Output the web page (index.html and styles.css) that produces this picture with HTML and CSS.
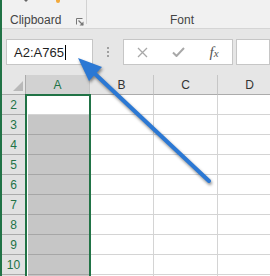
FILE: index.html
```html
<!DOCTYPE html>
<html>
<head>
<meta charset="utf-8">
<link rel="stylesheet" href="styles.css">
</head>
<body>
<div class="app">
  <div class="ribbon">
    <div class="group clip">
      <div class="clip-icons"><span class="caret"></span><span class="brush"></span></div>
      <div class="glabel">
        <span>Clipboard</span>
        <svg class="launcher" width="8" height="8" viewBox="0 0 8 8"><path d="M0.5 6.5V0.5H6.5" fill="none" stroke="#777" stroke-width="1"/><path d="M2.5 2.5L7 7" stroke="#777" stroke-width="1.2"/><path d="M7.5 3.5V7.5H3.5Z" fill="#777"/></svg>
      </div>
    </div>
    <div class="sep"></div>
    <div class="group fontg">
      <div class="glabel"><span>Font</span></div>
    </div>
  </div>

  <div class="fbar">
    <div class="namebox"><span>A2:A765</span><span class="cursor"></span></div>
    <div class="dots"><span></span><span></span><span></span></div>
    <div class="fbtns">
      <span class="slot"><svg width="11" height="11" viewBox="0 0 11 11"><path d="M1 1L10 10M10 1L1 10" stroke="#a8a8a8" stroke-width="1.3"/></svg></span>
      <span class="slot"><svg width="13" height="10" viewBox="0 0 13 10"><path d="M1 5.5L4.5 9L12 1" fill="none" stroke="#a8a8a8" stroke-width="2"/></svg></span>
      <span class="slot fx"><i>f<span class="sub">x</span></i></span>
    </div>
    <div class="finput"></div>
  </div>

  <div class="sheet">
    <div class="row hdr">
      <div class="rh corner"><span class="tri"></span></div>
      <div class="cell ch sel-h">A</div>
      <div class="cell ch">B</div>
      <div class="cell ch">C</div>
      <div class="cell ch">D</div>
    </div>
    <div class="row"><div class="rh">2</div><div class="cell a-active"></div><div class="cell"></div><div class="cell"></div><div class="cell"></div></div>
    <div class="row"><div class="rh">3</div><div class="cell a-sel"></div><div class="cell"></div><div class="cell"></div><div class="cell"></div></div>
    <div class="row"><div class="rh">4</div><div class="cell a-sel"></div><div class="cell"></div><div class="cell"></div><div class="cell"></div></div>
    <div class="row"><div class="rh">5</div><div class="cell a-sel"></div><div class="cell"></div><div class="cell"></div><div class="cell"></div></div>
    <div class="row"><div class="rh">6</div><div class="cell a-sel"></div><div class="cell"></div><div class="cell"></div><div class="cell"></div></div>
    <div class="row"><div class="rh">7</div><div class="cell a-sel"></div><div class="cell"></div><div class="cell"></div><div class="cell"></div></div>
    <div class="row"><div class="rh">8</div><div class="cell a-sel"></div><div class="cell"></div><div class="cell"></div><div class="cell"></div></div>
    <div class="row"><div class="rh">9</div><div class="cell a-sel"></div><div class="cell"></div><div class="cell"></div><div class="cell"></div></div>
    <div class="row"><div class="rh">10</div><div class="cell a-sel"></div><div class="cell"></div><div class="cell"></div><div class="cell"></div></div>
    <div class="row"><div class="rh"></div><div class="cell a-sel"></div><div class="cell"></div><div class="cell"></div><div class="cell"></div></div>
    <div class="selection"></div>
  </div>

  <svg class="arrow" width="270" height="276" viewBox="0 0 270 276">
    <line x1="209" y1="181" x2="93" y2="72" stroke="#2b78d4" stroke-width="4" stroke-linecap="round"/>
    <polygon points="78,58 102,67 89,81" fill="#2b78d4"/>
  </svg>
</div>
</body>
</html>
```

FILE: styles.css
```css
* { box-sizing: border-box; margin: 0; padding: 0; }
html, body { width: 270px; height: 276px; overflow: hidden; background: #fff; }
body { font-family: "Liberation Sans", Arial, sans-serif; }

.app {
  position: relative;
  width: 270px;
  height: 276px;
  border-left: 2px solid #217346;
  overflow: hidden;
}

/* Ribbon */
.ribbon {
  height: 29px;
  background: #f1f1f1;
  border-bottom: 1px solid #d5d5d5;
  display: flex;
  align-items: flex-start;
}
.group { height: 28px; display: flex; flex-direction: column; }
.clip { width: 84px; }
.clip-icons { height: 13px; position: relative; }
.caret {
  position: absolute; left: 22px; top: 0;
  border-left: 2px solid transparent; border-right: 2px solid transparent;
  border-top: 2px solid #666;
}
.brush {
  position: absolute; left: 54px; top: -2px;
  width: 4px; height: 5px; border-radius: 0 0 2px 2px;
  background: #f2a93b;
}
.glabel {
  display: flex; align-items: center;
  height: 14px;
  font-size: 12px; line-height: 14px; color: #444;
}
.clip .glabel { padding-left: 8px; }
.launcher { margin-left: auto; margin-right: 2px; margin-top: 3px; }
.sep { width: 1px; height: 24px; background: #d2d2d2; }
.fontg { flex: 1; }
.fontg .glabel { margin-top: 13px; padding-left: 83px; }

/* Formula bar */
.fbar {
  height: 46px;
  background: #e6e6e6;
  display: flex;
  align-items: flex-start;
  padding-top: 10px;
}
.namebox {
  margin-left: 4px;
  width: 102px; height: 26px;
  background: #fff;
  border: 1px solid #c6c6c6;
  display: flex; align-items: center;
  padding-left: 7px;
  font-size: 13px; color: #1e1e1e;
}
.cursor { width: 1px; height: 15px; background: #000; margin-left: 1px; }
.dots {
  margin-left: 14px; margin-top: 8px;
  display: flex; flex-direction: column; gap: 2px;
}
.dots span { width: 2px; height: 2px; background: #a0a0a0; }
.fbtns {
  margin-left: 14px;
  width: 110px; height: 26px;
  background: #fff;
  border: 1px solid #c6c6c6;
  display: flex; align-items: center;
}
.slot { width: 36px; display: flex; justify-content: center; align-items: center; }
.fx i {
  font-family: "Liberation Serif", "Times New Roman", serif;
  font-size: 15px; color: #555; line-height: 1;
}
.fx .sub { font-size: 11px; }
.finput {
  margin-left: 3px;
  width: 40px; height: 26px;
  background: #fff;
  border: 1px solid #c6c6c6;
}

/* Sheet */
.sheet { position: relative; }
.row { display: flex; height: 20px; }
.rh {
  width: 24px; flex: none;
  background: #e1e1e1;
  border-right: 1px solid #ababab;
  border-bottom: 1px solid #ababab;
  font-size: 12px; color: #217346;
  display: flex; align-items: center; justify-content: center;
}
.cell {
  width: 64px; flex: none;
  border-right: 1px solid #d4d4d4;
  border-bottom: 1px solid #d4d4d4;
}
.hdr { background: #e6e6e6; }
.hdr .rh { background: #e6e6e6; position: relative; }
.tri {
  position: absolute; right: 2px; bottom: 3px;
  width: 0; height: 0;
  border-left: 10px solid transparent;
  border-bottom: 10px solid #b9b9b9;
}
.ch {
  background: #e6e6e6;
  border-right: 1px solid #c6c6c6;
  border-bottom: 1px solid #ababab;
  font-size: 12px; color: #333;
  display: flex; align-items: center; justify-content: center;
}
.sel-h { background: #d2d2d2; color: #217346; }
.a-sel { background: #c6c6c6; border-bottom-color: #a6a6a6; }

.selection {
  position: absolute;
  left: 23px; top: 19px;
  width: 66px; height: 240px;
  border: 2px solid #217346;
  box-shadow: inset 1px 0 0 #fff;
}

/* Arrow overlay */
.arrow {
  position: absolute; left: -2px; top: 0;
  filter: drop-shadow(1px 2px 1.5px rgba(0,0,0,0.45));
}
```
